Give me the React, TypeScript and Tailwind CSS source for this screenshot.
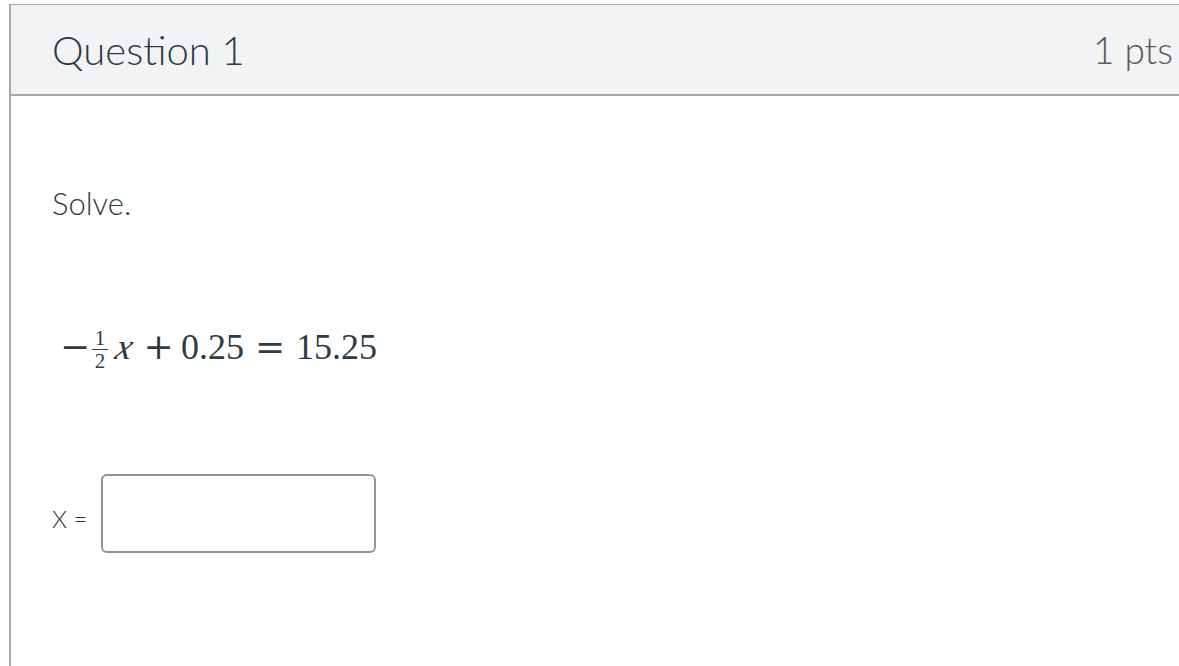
import React from "react";

const serif = { fontFamily: "'Liberation Serif', 'Times New Roman', serif" };
const opFont = { fontFamily: "'DejaVu Serif', 'Liberation Serif', serif" };

const App: React.FC = () => {
  return (
    <div className="w-[1179px] h-[666px] overflow-hidden bg-white pt-[4px] pl-[9px]" style={{ fontFamily: "Lato, 'Liberation Sans', sans-serif" }}>
      <div className="w-[1190px] h-[700px] border-t border-l-2 border-[#a9a9a9]">
        {/* header */}
        <div className="h-[91px] bg-[#f2f3f4] border-b-2 border-[#a9a9a9] flex items-center justify-between pl-[41px] pr-[26px]">
          <h2 className="text-[40px] text-[#2d3b45] font-light leading-none">Question 1</h2>
          <span className="text-[37px] text-[#5a5a5a] font-light leading-none">1 pts</span>
        </div>

        {/* body */}
        <div className="pl-[41px] pt-[92px]">
          <p className="text-[31px] text-[#2d3b45] font-light leading-none">Solve.</p>

          {/* -1/2 x + 0.25 = 15.25 */}
          <div className="mt-[108px] text-[36px] text-[#2d3b45] leading-[40px] whitespace-nowrap" style={serif}>
            <span className="inline-block w-[27px] ml-[8px] text-center" style={opFont}>−</span>
            <span className="inline-block w-[20px] ml-[3px] text-center text-[21px] leading-[18px] align-[-9px]">
              <span className="block">1</span>
              <span className="block my-[2px] mx-[2px] border-t border-[#2d3b45]" />
              <span className="block">2</span>
            </span>
            <span className="inline-block w-[29px] text-center italic text-[37px] -skew-x-12">x</span>
            <span className="inline-block w-[35px] ml-[2px] text-center" style={opFont}>+</span>
            <span className="inline-block ml-[5px]">0.25</span>
            <span className="inline-block w-[52px] text-center" style={opFont}>=</span>
            <span className="inline-block">15.25</span>
          </div>

          <div className="mt-[104px] flex items-center">
            <span className="text-[24px] text-[#2d3b45] font-light mr-[14px] mt-[10px]">X =</span>
            <input type="text" className="w-[275px] h-[79px] border-2 border-[#8d959d] rounded-[6px] bg-white outline-none" />
          </div>
        </div>
      </div>
    </div>
  );
};

export default App;
